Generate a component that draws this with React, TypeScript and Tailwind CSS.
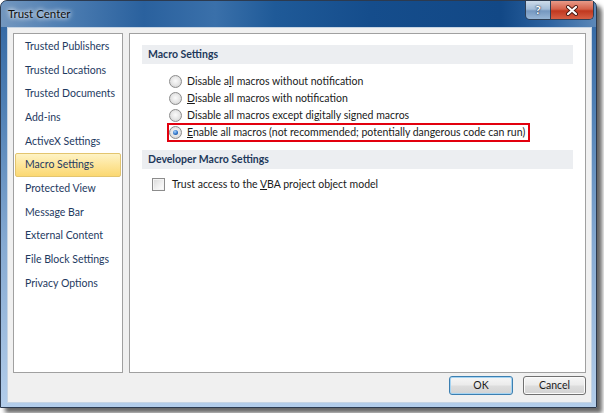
import React from 'react';

const navItems = [
  'Trusted Publishers',
  'Trusted Locations',
  'Trusted Documents',
  'Add-ins',
  'ActiveX Settings',
  'Macro Settings',
  'Protected View',
  'Message Bar',
  'External Content',
  'File Block Settings',
  'Privacy Options',
];

// label pieces: [before, accessKey, after]
const macroOptions: { label: [string, string, string]; checked?: boolean }[] = [
  { label: ['Disable a', 'l', 'l macros without notification'] },
  { label: ['', 'D', 'isable all macros with notification'] },
  { label: ['Disable all macros except di', 'g', 'itally signed macros'] },
  { label: ['', 'E', 'nable all macros (not recommended; potentially dangerous code can run)'], checked: true },
];

function Radio({ checked }: { checked?: boolean }) {
  return (
    <span className="flex h-[13px] w-[13px] shrink-0 items-center justify-center rounded-full border border-[#8c8c8c] bg-[radial-gradient(circle_at_50%_45%,#fbfbfb_0%,#e6e6e6_50%,#c9c9c9_100%)]">
      {checked && (
        <span className="h-[5px] w-[5px] rounded-full bg-[radial-gradient(circle_at_40%_35%,#a8d4ff_0%,#2f74c8_55%,#0c3d82_100%)]" />
      )}
    </span>
  );
}

function Label({ parts }: { parts: [string, string, string] }) {
  return (
    <span className="whitespace-nowrap text-[10.5px] leading-none text-[#1a1a1a]">
      {parts[0]}
      <u className="underline-offset-1">{parts[1]}</u>
      {parts[2]}
    </span>
  );
}

function SectionHeader({ title }: { title: string }) {
  return (
    <div className="mx-[12px] flex h-[19px] items-center bg-[#eceef1] pl-[6px] pt-[1px] text-[10.5px] font-bold text-[#1e395b]">
      {title}
    </div>
  );
}

function CaptionButtons() {
  return (
    <div className="mr-[2px] flex h-[19px] overflow-hidden rounded-b-[5px] border border-t-0 border-[#2f3f55]">
      <div className="flex w-[25px] items-center justify-center border-r border-[#2f3f55] bg-[linear-gradient(180deg,#cddbea_0%,#a3bcd8_45%,#7597bf_55%,#98b6d6_100%)] text-[12px] font-bold text-white [text-shadow:0_0_2px_#1d3552,0_0_1px_#1d3552]">
        ?
      </div>
      <div className="flex w-[42px] items-center justify-center bg-[linear-gradient(180deg,#e89a88_0%,#d5614a_45%,#c0381f_55%,#d65f44_100%)]">
        <svg width="14" height="11" viewBox="0 0 14 11">
          <path d="M3 2 L11 9 M11 2 L3 9" stroke="#4a1a12" strokeWidth="4" strokeLinecap="round" />
          <path d="M3 2 L11 9 M11 2 L3 9" stroke="#ffffff" strokeWidth="2.2" strokeLinecap="round" />
        </svg>
      </div>
    </div>
  );
}

function WinButton({ children, primary, width }: { children: React.ReactNode; primary?: boolean; width: string }) {
  return (
    <button
      className={
        'flex h-[19px] items-center justify-center rounded-[3px] border bg-[linear-gradient(180deg,#f6f6f6_0%,#ebebeb_48%,#dddddd_52%,#d3d3d3_100%)] text-[10.5px] text-[#1b1b1b] ' +
        width +
        (primary
          ? ' border-[#3c7fb1] shadow-[inset_0_0_0_1px_#a6d4f2]'
          : ' border-[#707070] shadow-[inset_0_0_0_1px_#fbfbfb]')
      }
    >
      {children}
    </button>
  );
}

export default function App() {
  return (
    <div className="h-[413px] w-[604px] overflow-hidden bg-white font-[Lato,Liberation_Sans,sans-serif]">
      <div className="flex h-[408px] w-[597px] flex-col rounded-t-[7px] border border-[#2c3a4f] bg-[linear-gradient(180deg,#2f64a0_0%,#4e7fb4_25%,#86aad2_60%,#b3cdea_100%)] shadow-[5px_5px_4px_rgba(0,0,0,0.6)]">
        {/* title bar */}
        <div className="flex h-[26px] shrink-0 items-start justify-between rounded-t-[6px] bg-[linear-gradient(90deg,#7397bf_0%,#4f7fb3_10%,#2a619e_24%,#3a70aa_36%,#1f5a98_46%,#154d8c_62%,#124886_84%,#2d63a0_92%,#5c88b8_100%)]">
          <div className="pl-[7px] pt-[7px] text-[11.5px] leading-none text-[#101010] [text-shadow:0_0_4px_#ffffff,0_0_6px_#ffffff]">
            Trust Center
          </div>
          <CaptionButtons />
        </div>

        {/* client area */}
        <div className="mb-[4px] ml-[6px] mr-[4px] flex flex-1 flex-col border border-[#c6d4e3] bg-[#f0f0f0] p-[5px]">
          <div className="flex h-[340px] gap-[6px]">
            {/* left navigation */}
            <div className="w-[110px] shrink-0 border border-[#a0a0a0] bg-white pt-[1px]">
              {navItems.map((item) =>
                item === 'Macro Settings' ? (
                  <div
                    key={item}
                    className="mx-[1px] flex h-[23.7px] items-center rounded-[2px] border border-[#e3c56f] bg-[linear-gradient(180deg,#fef3c5_0%,#fde59a_50%,#fbd872_100%)] pl-[9px] text-[10.5px] text-[#1e3a5f]"
                  >
                    {item}
                  </div>
                ) : (
                  <div key={item} className="flex h-[23.7px] items-center pl-[11px] text-[10.5px] text-[#1e3a5f]">
                    {item}
                  </div>
                )
              )}
            </div>

            {/* right content */}
            <div className="flex flex-1 flex-col border border-[#a0a0a0] bg-white pt-[11px]">
              <SectionHeader title="Macro Settings" />
              <div className="mt-[9px] flex flex-col">
                {macroOptions.map((opt) =>
                  opt.checked ? (
                    <div
                      key={opt.label.join('')}
                      className="-mt-[1px] ml-[37px] flex h-[19px] w-[363px] items-center gap-[5px] border-2 border-[#e2000e]"
                    >
                      <Radio checked />
                      <Label parts={opt.label} />
                    </div>
                  ) : (
                    <div key={opt.label.join('')} className="flex h-[17px] items-center gap-[5px] pl-[39px]">
                      <Radio />
                      <Label parts={opt.label} />
                    </div>
                  )
                )}
              </div>
              <div className="mt-[8px]">
                <SectionHeader title="Developer Macro Settings" />
              </div>
              <div className="ml-[22px] mt-[7px] flex h-[16px] items-center gap-[7px]">
                <span className="h-[13px] w-[13px] shrink-0 border border-[#8c8c8c] bg-[linear-gradient(135deg,#d9d9d9_0%,#f2f2f2_60%,#ffffff_100%)] shadow-[inset_0_0_0_1px_#f4f4f4]" />
                <Label parts={['Trust access to the ', 'V', 'BA project object model']} />
              </div>
            </div>
          </div>

          {/* buttons */}
          <div className="mt-[3px] flex justify-end gap-[10px]">
            <WinButton primary width="w-[64px]">
              OK
            </WinButton>
            <WinButton width="w-[63px]">Cancel</WinButton>
          </div>
        </div>
      </div>
    </div>
  );
}
